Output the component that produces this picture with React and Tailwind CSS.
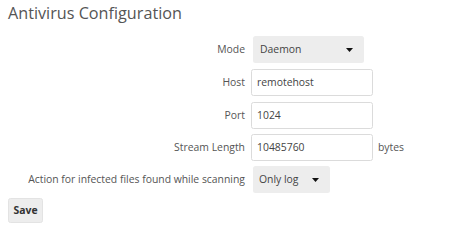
import React from "react";

const Arrow = () => (
  <svg width="7" height="4" viewBox="0 0 7 4" className="shrink-0">
    <path d="M0 0 L7 0 L3.5 4 Z" fill="#111" />
  </svg>
);

function Row({ label, children }) {
  return (
    <div className="flex items-center h-[27px]">
      <div className="w-[245px] shrink-0 text-right pr-0 text-[10.4px] text-[#555]">{label}</div>
      <div className="flex items-center pl-[6px]">{children}</div>
    </div>
  );
}

function Input({ value, w = "w-[122px]" }) {
  return (
    <div className={`${w} h-[27px] border border-[#dbdbdb] rounded-[2.5px] bg-white flex items-center pl-[5px] text-[10.4px] text-[#444]`}>
      {value}
    </div>
  );
}

export default function App() {
  return (
    <div className="w-[474px] h-[228px] bg-white overflow-hidden" style={{ fontFamily: '"Open Sans", sans-serif' }}>
      <div className="pl-[8px] text-[16.2px] leading-[26px] text-[#555]">Antivirus Configuration</div>
      <div className="mt-[10px] flex flex-col">
        <Row label="Mode">
          <div className="ml-[2px] w-[111px] h-[27px] bg-[#ededed] rounded-[2.5px] flex items-center justify-between pl-[7px] pr-[11px] text-[10.4px] text-[#444]">
            <span>Daemon</span>
            <Arrow />
          </div>
        </Row>
        <div className="mt-[6px]">
          <Row label="Host"><Input value="remotehost" /></Row>
        </div>
        <div className="mt-[6px]">
          <Row label="Port"><Input value="1024" /></Row>
        </div>
        <div className="mt-[5px]">
          <Row label="Stream Length">
            <Input value="10485760" />
            <span className="ml-[5px] text-[10.4px] text-[#555]">bytes</span>
          </Row>
        </div>
        <div className="mt-[5px]">
          <Row label="Action for infected files found while scanning">
            <div className="ml-[2px] w-[77px] h-[27px] bg-[#ededed] rounded-[2.5px] flex items-center justify-between pl-[6px] pr-[11px] text-[10.4px] text-[#444]">
              <span>Only log</span>
              <Arrow />
            </div>
          </Row>
        </div>
      </div>
      <div className="mt-[5px] pl-[8px]">
        <div className="w-[35px] h-[25px] bg-[#ededed] border border-[#e3e3e3] rounded-[2.5px] flex items-center justify-center text-[10.4px] font-bold text-[#333]">
          Save
        </div>
      </div>
    </div>
  );
}
